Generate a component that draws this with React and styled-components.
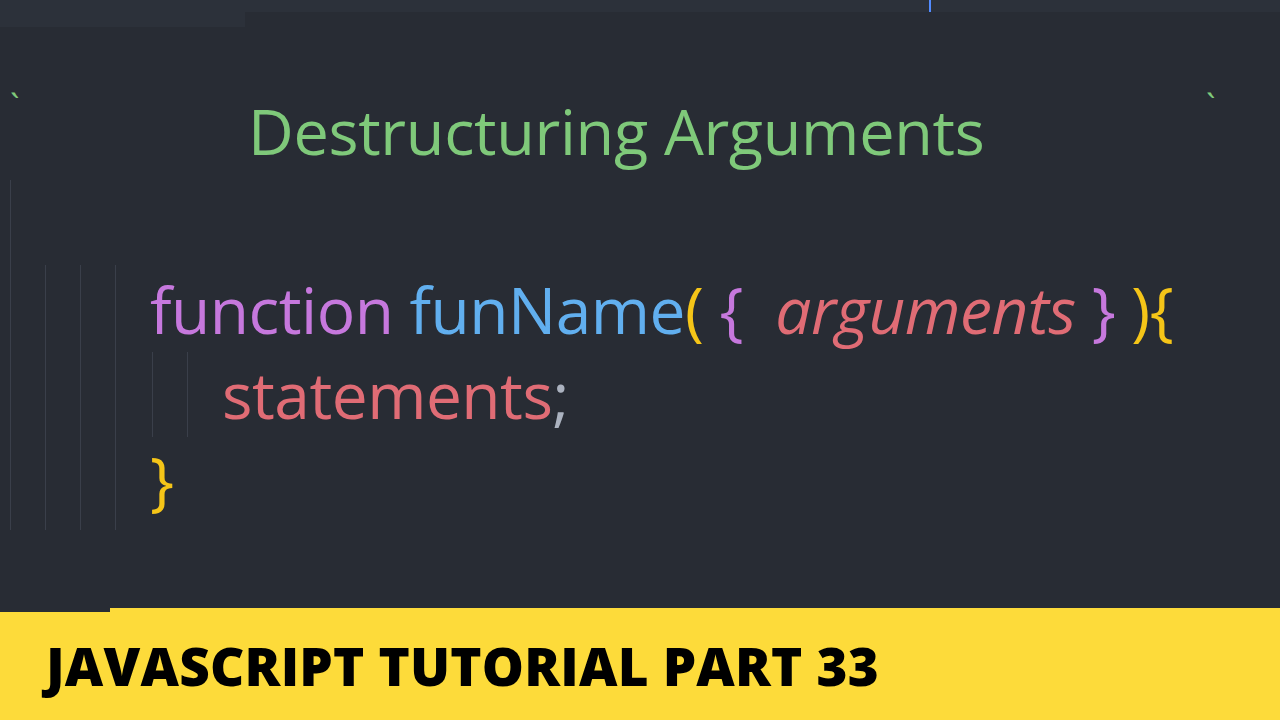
import styled, { createGlobalStyle } from 'styled-components';

const Global = createGlobalStyle`
  html, body { margin: 0; padding: 0; background: #282c34; }
`;

const Screen = styled.div`
  width: 1280px;
  height: 720px;
  display: flex;
  flex-direction: column;
  background: #282c34;
  font-family: "Open Sans", "Noto Sans", sans-serif;
  overflow: hidden;
  & > * { flex-shrink: 0; }
`;

const TopBar = styled.div`
  height: 12px;
  background: #2c313a;
  display: flex;
`;

const Cursor = styled.div`
  width: 2px;
  height: 12px;
  margin-left: 929px;
  background: #528bff;
`;

const TabStub = styled.div`
  width: 245px;
  height: 15px;
  background: #2c313a;
`;

const TitleRow = styled.div`
  display: flex;
  align-items: flex-start;
  height: 203px;
  padding: 62px 0 0 10px;
  box-sizing: border-box;
`;

const Tick = styled.span`
  color: #7fc97a;
  font-size: 34px;
  line-height: 34px;
  width: ${p => p.w}px;
`;

const Title = styled.span`
  color: #7fc97a;
  font-size: 63px;
  line-height: 84px;
  width: 958px;
  letter-spacing: -0.3px;
`;

const Code = styled.div`
  display: flex;
  height: 378px;
  box-sizing: border-box;
`;

const Guides = styled.div`
  display: flex;
  padding-left: 10px;
  gap: 34px;
`;

const Guide = styled.div`
  width: 1px;
  height: ${p => p.h}px;
  margin-top: ${p => p.top}px;
  background: #3a3f4a;
`;

const Lines = styled.div`
  display: flex;
  flex-direction: column;
  margin-left: 34px;
  padding-top: 37px;
  font-size: 64px;
  line-height: 85px;
  letter-spacing: -0.5px;
  white-space: pre;
`;

const Line = styled.div`
  display: flex;
  align-items: stretch;
`;

const Indent = styled.div`
  width: 34px;
  border-left: 1px solid #3a3f4a;
  margin-left: ${p => p.ml}px;
`;

const Tok = styled.span`
  color: ${p => p.c};
  font-style: ${p => (p.i ? 'italic' : 'normal')};
`;

const Banner = styled.div`
  flex: 1;
  display: flex;
  flex-direction: column;
`;

const Notch = styled.div`
  height: 4px;
  display: flex;
  background: #282c34;
  &::after {
    content: '';
    margin-left: 110px;
    flex: 1;
    background: #fddb3a;
  }
`;

const Strip = styled.div`
  flex: 1;
  background: #fddb3a;
  padding: 22px 0 0 46px;
  color: #000;
  font-size: 53px;
  font-weight: 800;
  line-height: 64px;
  letter-spacing: 0.2px;
`;

export default function App() {
  return (
    <Screen>
      <Global />
      <TopBar><Cursor /></TopBar>
      <TabStub />
      <TitleRow>
        <Tick w={238}>`</Tick>
        <Title>Destructuring Arguments</Title>
        <Tick w={30}>`</Tick>
      </TitleRow>
      <Code>
        <Guides>
          <Guide top={-50} h={350} />
          <Guide top={35} h={265} />
          <Guide top={35} h={265} />
          <Guide top={35} h={265} />
        </Guides>
        <Lines>
          <Line>
            <Tok c="#c678dd">function </Tok>
            <Tok c="#61afef">funName</Tok>
            <Tok c="#f5c518">( </Tok>
            <Tok c="#c678dd">{"{  "}</Tok>
            <Tok c="#e06c75" i>arguments </Tok>
            <Tok c="#c678dd">{"}"}</Tok>
            <Tok c="#f5c518"> ){"{"}</Tok>
          </Line>
          <Line>
            <Indent ml={2} />
            <Indent ml={0} />
            <Tok c="#e06c75">statements</Tok>
            <Tok c="#abb2bf">;</Tok>
          </Line>
          <Line>
            <Tok c="#f5c518">{"}"}</Tok>
          </Line>
        </Lines>
      </Code>
      <Banner>
        <Notch />
        <Strip>JAVASCRIPT TUTORIAL PART 33</Strip>
      </Banner>
    </Screen>
  );
}
